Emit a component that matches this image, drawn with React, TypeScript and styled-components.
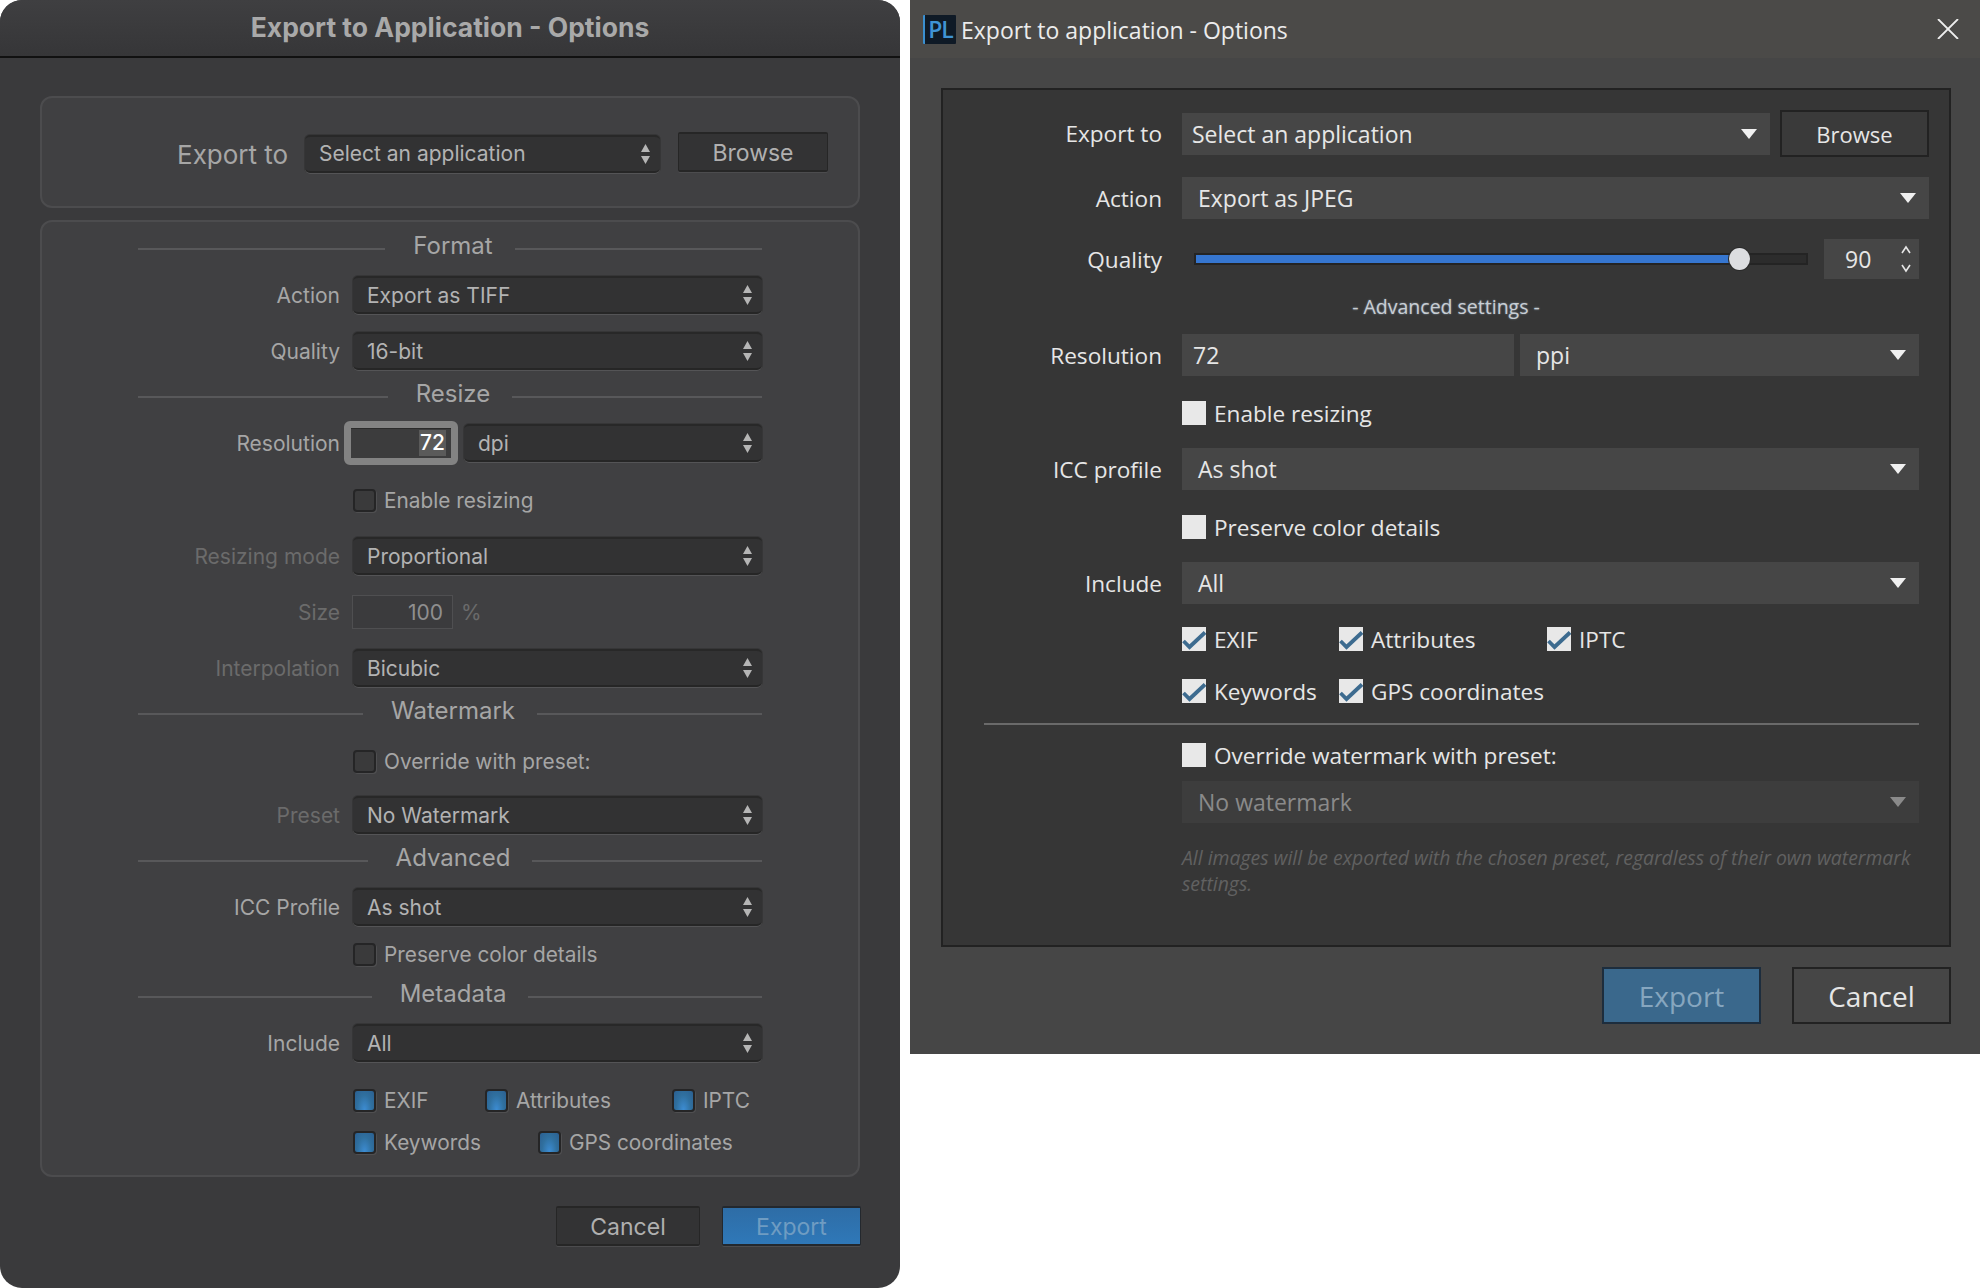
import React from 'react'
import styled, { createGlobalStyle } from 'styled-components';

const GlobalStyle = createGlobalStyle`
    html, body {
        margin: 0;
        padding: 0;
        background: #fff;
        overflow: hidden;
    }
`;

const Page = styled.div`
    width: 1980px;
    height: 1288px;
    display: flex;
    gap: 10px;
    align-items: flex-start;
`;

/* ---------- left dialog (mac) ---------- */

const MacDialog = styled.div`
    width: 900px;
    height: 1288px;
    flex: none;
    box-sizing: border-box;
    background: #3a3a3c;
    border-radius: 22px;
    font-family: Inter, "Liberation Sans", sans-serif;
    font-size: 21px;
    color: #acacac;
    overflow: hidden;
`;

const MacTitleBar = styled.div`
    height: 53px;
    display: flex;
    align-items: center;
    justify-content: center;
    background: linear-gradient(#3f3f41, #363638);
    border-bottom: 2px solid #111;
    font-size: 26.5px;
    font-weight: 700;
    color: #a9a9a9;
    padding-bottom: 3px;
`;

const MacBody = styled.div`
    padding: 38px 40px 0 40px;
`;

const Group = styled.div`
    box-sizing: border-box;
    width: 820px;
    background: #404042;
    border: 2px solid #4c4c4e;
    border-radius: 12px;
`;

const ExportGroup = styled(Group)`
    height: 112px;
    display: flex;
    align-items: center;
    padding-left: 135px;
`;

const FormGroup = styled(Group)`
    height: 957px;
    margin-top: 12px;
    padding: 9px 0 0 96px;
`;

const MacExportLabel = styled.span`
    width: 111px;
    font-size: 26px;
    margin-top: 4px;
    text-align: right;
    color: #a6a6a6;
    white-space: nowrap;
`;

const MacSelectBox = styled.div<{ $width?: number }>`
    box-sizing: border-box;
    height: 38px;
    width: ${(p) => (p.$width ? `${p.$width}px` : 'auto')};
    flex: ${(p) => (p.$width ? 'none' : '1')};
    display: flex;
    align-items: center;
    justify-content: space-between;
    padding: 0 9px 0 14px;
    background: #323233;
    border-radius: 5px;
    border-top: 2px solid #282828;
    border-bottom: 2px solid #262626;
    box-shadow: 0 1px 0 #545456, 0 0 0 1px #363637;
    color: #b3b3b3;
`;

const MacExportSelect = styled(MacSelectBox)`
    margin: 3px 0 0 17px;
`;

const MacButton = styled.div<{ $width: number }>`
    box-sizing: border-box;
    width: ${(p) => p.$width}px;
    height: 40px;
    padding-top: 1px;
    display: flex;
    align-items: center;
    justify-content: center;
    background: #333334;
    border: 1px solid #262626;
    border-top-width: 2px;
    border-bottom-width: 2px;
    border-radius: 2px;
    box-shadow: 0 1px 0 #4c4c4e;
    font-size: 23px;
    color: #b0b0b0;
`;

const MacBrowse = styled(MacButton)`
    margin-left: 18px;
`;

const MacExportButton = styled(MacButton)`
    background: linear-gradient(#2e6da6, #2f78b8);
    border-color: #23282e;
    color: #6f9cc2;
`;

const SectionRow = styled.div<{ $top: number }>`
    width: 624px;
    height: 36px;
    margin-top: ${(p) => p.$top}px;
    display: flex;
    align-items: center;
    gap: 22px;
`;

const SectionLine = styled.div`
    flex: 1;
    height: 2px;
    background: #58585a;
`;

const SectionName = styled.span`
    padding: 0 0 7px 6px;
    font-size: 24px;
    color: #a6a6a6;
`;

const MacRow = styled.div<{ $top: number }>`
    width: 624px;
    margin-top: ${(p) => p.$top}px;
    display: flex;
    align-items: center;
`;

const MacLabel = styled.span<{ $dim?: boolean }>`
    width: 202px;
    margin-right: 13px;
    flex: none;
    text-align: right;
    color: ${(p) => (p.$dim ? '#6b6b6b' : '#a6a6a6')};
`;

const MacFocusField = styled.div`
    box-sizing: border-box;
    width: 114px;
    height: 44px;
    margin: -3px 6px -3px -9px;
    flex: none;
    display: flex;
    align-items: center;
    justify-content: flex-end;
    padding-right: 5px;
    background: #3c3c3d;
    border: 7px solid #838383;
    border-radius: 6px;
    box-shadow: inset 0 1px 0 #2b2b2b;
`;

const SelectedValue = styled.span`
    background: #5a5a5a;
    color: #fff;
    line-height: 26px;
    padding: 0 1px;
    font-weight: 500;
`;

const MacSizeField = styled.div`
    box-sizing: border-box;
    width: 101px;
    height: 34px;
    flex: none;
    margin-left: -1px;
    display: flex;
    align-items: center;
    justify-content: flex-end;
    padding-right: 9px;
    background: #3b3b3d;
    border: 1px solid #4f4f51;
    color: #8f8f8f;
`;

const Percent = styled.span`
    margin-left: 8px;
    color: #6b6b6b;
`;

const MacCheckItem = styled.div<{ $width?: number }>`
    width: ${(p) => (p.$width ? `${p.$width}px` : 'auto')};
    height: 24px;
    flex: none;
    display: flex;
    align-items: center;
    gap: 8px;
    font-size: 20.8px;
    color: #a6a6a6;
`;

const MacCheckBox = styled.span<{ $on?: boolean }>`
    box-sizing: border-box;
    width: 23px;
    height: 23px;
    flex: none;
    border: 2px solid #252526;
    border-radius: 4px;
    background: ${(p) =>
        p.$on
            ? 'radial-gradient(ellipse at 50% 100%, #3d8dd4 0, #30709f 55%, #2b5f90 100%)'
            : '#3a3a3b'};
    box-shadow: 1px 1px 0 #4f4f51;
`;

const MacCheckIndent = styled.div`
    margin-left: 215px;
    display: flex;
`;

const MacFooter = styled.div`
    margin-top: 29px;
    width: 821px;
    display: flex;
    justify-content: flex-end;
    gap: 22px;
`;

const UpDownArrows = () => (
    <svg width="11" height="20" viewBox="0 0 11 20" fill="#b5b5b5">
        <path d="M5.5 0 L10 8 L1 8 Z" />
        <path d="M5.5 20 L10 12 L1 12 Z" />
    </svg>
);

const MacSelect = ({ value }: { value: string }) => (
    <MacSelectBox>
        <span>{value}</span>
        <UpDownArrows />
    </MacSelectBox>
);

const MacDialogView: React.FC = () => (
    <MacDialog>
        <MacTitleBar>Export to Application - Options</MacTitleBar>
        <MacBody>
            <ExportGroup>
                <MacExportLabel>Export to</MacExportLabel>
                <MacExportSelect $width={355}>
                    <span>Select an application</span>
                    <UpDownArrows />
                </MacExportSelect>
                <MacBrowse $width={150}>Browse</MacBrowse>
            </ExportGroup>
            <FormGroup>
                <SectionRow $top={0}><SectionLine /><SectionName>Format</SectionName><SectionLine /></SectionRow>
                <MacRow $top={9}><MacLabel>Action</MacLabel><MacSelect value="Export as TIFF" /></MacRow>
                <MacRow $top={18}><MacLabel>Quality</MacLabel><MacSelect value="16-bit" /></MacRow>
                <SectionRow $top={9}><SectionLine /><SectionName>Resize</SectionName><SectionLine /></SectionRow>
                <MacRow $top={9}>
                    <MacLabel>Resolution</MacLabel>
                    <MacFocusField><SelectedValue>72</SelectedValue></MacFocusField>
                    <MacSelect value="dpi" />
                </MacRow>
                <MacRow $top={26}>
                    <MacCheckIndent><MacCheckItem><MacCheckBox />Enable resizing</MacCheckItem></MacCheckIndent>
                </MacRow>
                <MacRow $top={25}><MacLabel $dim>Resizing mode</MacLabel><MacSelect value="Proportional" /></MacRow>
                <MacRow $top={20}>
                    <MacLabel $dim>Size</MacLabel>
                    <MacSizeField>100</MacSizeField>
                    <Percent>%</Percent>
                </MacRow>
                <MacRow $top={20}><MacLabel $dim>Interpolation</MacLabel><MacSelect value="Bicubic" /></MacRow>
                <SectionRow $top={9}><SectionLine /><SectionName>Watermark</SectionName><SectionLine /></SectionRow>
                <MacRow $top={17}>
                    <MacCheckIndent><MacCheckItem><MacCheckBox />Override with preset:</MacCheckItem></MacCheckIndent>
                </MacRow>
                <MacRow $top={23}><MacLabel $dim>Preset</MacLabel><MacSelect value="No Watermark" /></MacRow>
                <SectionRow $top={9}><SectionLine /><SectionName>Advanced</SectionName><SectionLine /></SectionRow>
                <MacRow $top={9}><MacLabel>ICC Profile</MacLabel><MacSelect value="As shot" /></MacRow>
                <MacRow $top={16}>
                    <MacCheckIndent><MacCheckItem><MacCheckBox />Preserve color details</MacCheckItem></MacCheckIndent>
                </MacRow>
                <SectionRow $top={13}><SectionLine /><SectionName>Metadata</SectionName><SectionLine /></SectionRow>
                <MacRow $top={9}><MacLabel>Include</MacLabel><MacSelect value="All" /></MacRow>
                <MacRow $top={26}>
                    <MacCheckIndent>
                        <MacCheckItem $width={132}><MacCheckBox $on />EXIF</MacCheckItem>
                        <MacCheckItem $width={187}><MacCheckBox $on />Attributes</MacCheckItem>
                        <MacCheckItem><MacCheckBox $on />IPTC</MacCheckItem>
                    </MacCheckIndent>
                </MacRow>
                <MacRow $top={18}>
                    <MacCheckIndent>
                        <MacCheckItem $width={185}><MacCheckBox $on />Keywords</MacCheckItem>
                        <MacCheckItem><MacCheckBox $on />GPS coordinates</MacCheckItem>
                    </MacCheckIndent>
                </MacRow>
            </FormGroup>
            <MacFooter>
                <MacButton $width={144}>Cancel</MacButton>
                <MacExportButton $width={139}>Export</MacExportButton>
            </MacFooter>
        </MacBody>
    </MacDialog>
);

/* ---------- right dialog (windows) ---------- */

const WinDialog = styled.div`
    width: 1070px;
    height: 1054px;
    flex: none;
    background: #464646;
    font-family: "Open Sans", "Noto Sans", sans-serif;
    font-size: 22.6px;
    color: #e6e6e6;
`;

const WinTitleBar = styled.div`
    height: 58px;
    display: flex;
    align-items: center;
    padding: 0 21px 0 13px;
    background: #4b4a48;
    font-size: 23px;
    color: #ececec;
`;

const AppIcon = styled.span`
    box-sizing: border-box;
    width: 33px;
    height: 29px;
    flex: none;
    margin-right: 5px;
    display: flex;
    align-items: center;
    justify-content: center;
    background: #0f1a26;
    border-left: 2px solid #3a8fd0;
    border-radius: 1px;
    font-size: 23px;
    font-weight: 600;
    letter-spacing: -1px;
    color: #3f93d4;
`;

const WinTitle = styled.span`
    flex: 1;
    padding-top: 1px;
`;

const Panel = styled.div`
    box-sizing: border-box;
    width: 1010px;
    height: 859px;
    margin: 30px 0 0 31px;
    padding: 20px 0 0;
    background: #363636;
    border: 2px solid #222;
`;

const WinRow = styled.div<{ $top: number; $right?: number; $left?: number }>`
    display: flex;
    align-items: center;
    margin: ${(p) => p.$top}px ${(p) => p.$right ?? 0}px 0 ${(p) => p.$left ?? 0}px;
`;

const WinLabel = styled.span`
    width: 219px;
    margin-right: 20px;
    flex: none;
    text-align: right;
`;

const WinSelectBox = styled.div<{ $width?: number; $pad?: number; $off?: boolean }>`
    box-sizing: border-box;
    height: 42px;
    width: ${(p) => (p.$width ? `${p.$width}px` : 'auto')};
    flex: ${(p) => (p.$width ? 'none' : '1')};
    display: flex;
    align-items: center;
    justify-content: space-between;
    padding: 0 13px 0 ${(p) => p.$pad ?? 16}px;
    background: ${(p) => (p.$off ? '#3d3d3d' : '#464646')};
    font-size: 23px;
    color: ${(p) => (p.$off ? '#8a8a8a' : '#e6e6e6')};
`;

const WinUnitSelect = styled(WinSelectBox)`
    margin-left: 6px;
`;

const WinBrowse = styled.div`
    box-sizing: border-box;
    width: 149px;
    height: 47px;
    margin-left: 10px;
    display: flex;
    align-items: center;
    justify-content: center;
    border: 2px solid #222;
    background: #3a3a3a;
    font-size: 22px;
`;

const SliderTrack = styled.div`
    box-sizing: border-box;
    position: relative;
    width: 614px;
    height: 12px;
    margin-left: 12px;
    background: #2c2c2c;
    border: 2px solid #242424;
`;

const SliderFill = styled.div`
    height: 100%;
    background: #3676d0;
`;

const SliderKnob = styled.div`
    position: absolute;
    top: -7px;
    width: 21px;
    height: 22px;
    margin-left: -10px;
    border-radius: 50%;
    background: #dcdde0;
    box-shadow: 0 0 0 1px #2a2a2a;
`;

const Spinner = styled.div`
    box-sizing: border-box;
    width: 95px;
    height: 40px;
    margin-left: 16px;
    display: flex;
    align-items: center;
    justify-content: space-between;
    padding: 0 7px 0 21px;
    background: #464646;
    font-size: 23px;
`;

const AdvancedNote = styled.div`
    height: 24px;
    margin: 17px 0 14px 0;
    text-align: center;
    line-height: 22px;
    font-size: 19.5px;
    font-weight: 500;
    color: #c8ced4;
    text-shadow: 0 0 2px #7f8c99;
`;

const WinCheckIndent = styled.div`
    margin-left: 239px;
    display: flex;
`;

const WinCheckItem = styled.div<{ $width?: number }>`
    width: ${(p) => (p.$width ? `${p.$width}px` : 'auto')};
    height: 24px;
    flex: none;
    display: flex;
    align-items: center;
    gap: 8px;
`;

const WinCheckBoxFrame = styled.span`
    width: 24px;
    height: 24px;
    flex: none;
    background: #e8e8e8;
    display: block;
`;

const PanelDivider = styled.div`
    height: 2px;
    margin: 20px 30px 18px 41px;
    background: #6a6a6a;
`;

const WinNote = styled.div`
    margin: 22px 30px 0 239px;
    line-height: 26px;
    font-size: 19.4px;
    font-style: italic;
    color: #616161;
`;

const WinFooter = styled.div`
    margin: 20px 29px 0 0;
    display: flex;
    justify-content: flex-end;
    gap: 31px;
`;

const WinButton = styled.div`
    box-sizing: border-box;
    width: 159px;
    height: 57px;
    display: flex;
    align-items: center;
    justify-content: center;
    border: 2px solid #222;
    font-size: 28px;
    color: #e6e6e6;
`;

const WinExportButton = styled(WinButton)`
    background: #3a688c;
    border-color: #1d2d3d;
    color: #86a6bf;
`;

const DownTriangle = ({ off }: { off?: boolean }) => (
    <svg width="16" height="12" viewBox="0 0 16 12" fill={off ? '#8a8a8a' : '#f0f0f0'}>
        <path d="M0 1 L16 1 L8 11 Z" />
    </svg>
);

const TickBox = ({ on }: { on?: boolean }) => (
    <WinCheckBoxFrame>
        {on && (
            <svg width="24" height="24" viewBox="0 0 24 24" fill="none" stroke="#3d6b8f" strokeWidth="3.8">
                <path d="M1.5 14 L7.5 20 L23 5.5" />
            </svg>
        )}
    </WinCheckBoxFrame>
);

const WinDialogView: React.FC = () => (
    <WinDialog>
        <WinTitleBar>
            <AppIcon>PL</AppIcon>
            <WinTitle>Export to application - Options</WinTitle>
            <svg width="22" height="20" viewBox="0 0 22 20" stroke="#eee" strokeWidth="1.8">
                <path d="M1 0 L21 20 M21 0 L1 20" />
            </svg>
        </WinTitleBar>
        <Panel>
            <WinRow $top={0}>
                <WinLabel>Export to</WinLabel>
                <WinSelectBox $width={588} $pad={10}>
                    <span>Select an application</span>
                    <DownTriangle />
                </WinSelectBox>
                <WinBrowse>Browse</WinBrowse>
            </WinRow>
            <WinRow $top={20} $right={20}>
                <WinLabel>Action</WinLabel>
                <WinSelectBox><span>Export as JPEG</span><DownTriangle /></WinSelectBox>
            </WinRow>
            <WinRow $top={20}>
                <WinLabel>Quality</WinLabel>
                <SliderTrack>
                    <SliderFill style={{ width: `${(543 / 610) * 100}%` }} />
                    <SliderKnob style={{ left: 543 }} />
                </SliderTrack>
                <Spinner>
                    <span>90</span>
                    <svg width="12" height="30" viewBox="0 0 12 30" fill="none" stroke="#e6e6e6" strokeWidth="1.6">
                        <path d="M2 9 L6 3 L10 9 M2 21 L6 27 L10 21" />
                    </svg>
                </Spinner>
            </WinRow>
            <AdvancedNote>- Advanced settings -</AdvancedNote>
            <WinRow $top={0} $right={30}>
                <WinLabel>Resolution</WinLabel>
                <WinSelectBox $width={332} $pad={11}>72</WinSelectBox>
                <WinUnitSelect><span>ppi</span><DownTriangle /></WinUnitSelect>
            </WinRow>
            <WinRow $top={25}>
                <WinCheckIndent><WinCheckItem><TickBox />Enable resizing</WinCheckItem></WinCheckIndent>
            </WinRow>
            <WinRow $top={23} $right={30}>
                <WinLabel>ICC profile</WinLabel>
                <WinSelectBox><span>As shot</span><DownTriangle /></WinSelectBox>
            </WinRow>
            <WinRow $top={25}>
                <WinCheckIndent><WinCheckItem><TickBox />Preserve color details</WinCheckItem></WinCheckIndent>
            </WinRow>
            <WinRow $top={23} $right={30}>
                <WinLabel>Include</WinLabel>
                <WinSelectBox><span>All</span><DownTriangle /></WinSelectBox>
            </WinRow>
            <WinRow $top={23}>
                <WinCheckIndent>
                    <WinCheckItem $width={157}><TickBox on />EXIF</WinCheckItem>
                    <WinCheckItem $width={208}><TickBox on />Attributes</WinCheckItem>
                    <WinCheckItem><TickBox on />IPTC</WinCheckItem>
                </WinCheckIndent>
            </WinRow>
            <WinRow $top={28}>
                <WinCheckIndent>
                    <WinCheckItem $width={157}><TickBox on />Keywords</WinCheckItem>
                    <WinCheckItem><TickBox on />GPS coordinates</WinCheckItem>
                </WinCheckIndent>
            </WinRow>
            <PanelDivider />
            <WinRow $top={0}>
                <WinCheckIndent><WinCheckItem><TickBox />Override watermark with preset:</WinCheckItem></WinCheckIndent>
            </WinRow>
            <WinRow $top={14} $right={30} $left={239}>
                <WinSelectBox $off><span>No watermark</span><DownTriangle off /></WinSelectBox>
            </WinRow>
            <WinNote>All images will be exported with the chosen preset, regardless of their own watermark settings.</WinNote>
        </Panel>
        <WinFooter>
            <WinExportButton>Export</WinExportButton>
            <WinButton>Cancel</WinButton>
        </WinFooter>
    </WinDialog>
);

const App: React.FC = () => (
    <>
        <GlobalStyle />
        <Page>
            <MacDialogView />
            <WinDialogView />
        </Page>
    </>
);

export default App;
